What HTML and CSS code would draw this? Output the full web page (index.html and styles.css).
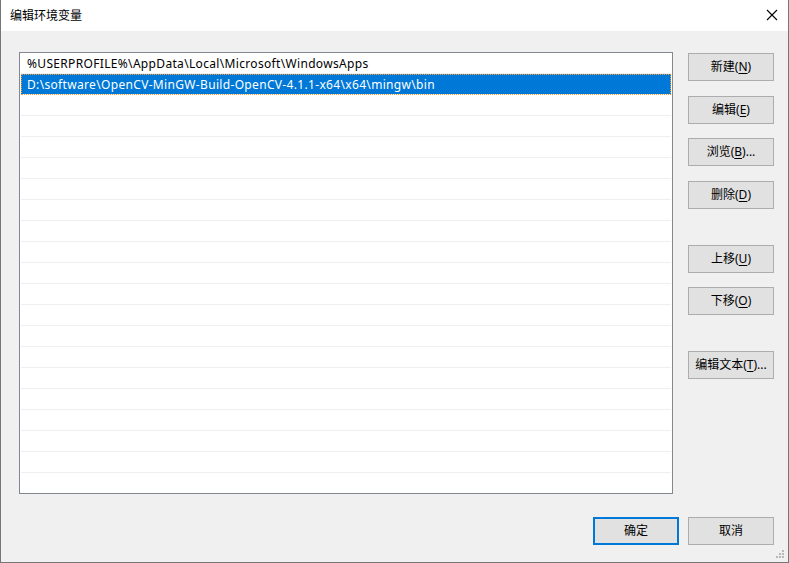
FILE: index.html
```html
<!DOCTYPE html>
<html lang="zh-CN">
<head>
<meta charset="utf-8">
<title>编辑环境变量</title>
<link rel="stylesheet" href="styles.css">
</head>
<body>
<div class="window">
  <div class="titlebar">
    <span class="title">编辑环境变量</span>
    <svg class="close" width="12" height="12" viewBox="0 0 12 12"><path d="M1 1 L11 11 M11 1 L1 11" stroke="#000" stroke-width="1.1" fill="none"/></svg>
  </div>
  <div class="content">
    <div class="main">
      <div class="list">
        <div class="row">%USERPROFILE%\AppData\Local\Microsoft\WindowsApps</div>
        <div class="row selected"><span>D:\software\OpenCV-MinGW-Build-OpenCV-4.1.1-x64\x64\mingw\bin</span></div>
        <div class="row"></div><div class="row"></div><div class="row"></div><div class="row"></div>
        <div class="row"></div><div class="row"></div><div class="row"></div><div class="row"></div>
        <div class="row"></div><div class="row"></div><div class="row"></div><div class="row"></div>
        <div class="row"></div><div class="row"></div><div class="row"></div><div class="row"></div>
        <div class="row"></div><div class="row"></div>
      </div>
      <div class="side">
        <button class="btn first">新建(<u>N</u>)</button>
        <button class="btn gap-15">编辑(<u>E</u>)</button>
        <button class="btn gap-14">浏览(<u>B</u>)...</button>
        <button class="btn gap-15">删除(<u>D</u>)</button>
        <button class="btn gap-36">上移(<u>U</u>)</button>
        <button class="btn gap-14">下移(<u>O</u>)</button>
        <button class="btn gap-36">编辑文本(<u>T</u>)...</button>
      </div>
    </div>
    <div class="footer">
      <button class="btn default">确定</button>
      <button class="btn">取消</button>
    </div>
  </div>
  <svg class="grip" width="9" height="9" viewBox="0 0 9 9">
    <rect x="6" y="0" width="2" height="2" fill="#b8b8b8"/>
    <rect x="3" y="3" width="2" height="2" fill="#b8b8b8"/>
    <rect x="6" y="3" width="2" height="2" fill="#b8b8b8"/>
    <rect x="0" y="6" width="2" height="2" fill="#b8b8b8"/>
    <rect x="3" y="6" width="2" height="2" fill="#b8b8b8"/>
    <rect x="6" y="6" width="2" height="2" fill="#b8b8b8"/>
  </svg>
</div>
</body>
</html>
```
FILE: styles.css
```css
* { box-sizing: border-box; }
html, body { margin: 0; padding: 0; background: #f0f0f0; }
body {
  font-family: "Noto Sans", "Noto Sans CJK SC", sans-serif;
  font-size: 12px;
  color: #000;
}
.window {
  position: relative;
  width: 789px;
  height: 563px;
  border-left: 1px solid #767676;
  border-right: 1px solid #767676;
  border-bottom: 1px solid #767676;
  background: #f0f0f0;
  display: flex;
  flex-direction: column;
}
.titlebar {
  height: 31px;
  background: #fff;
  display: flex;
  align-items: center;
  justify-content: space-between;
  padding: 0 10px 0 9px;
}
.title {
  font-family: "Noto Sans CJK SC", sans-serif;
  font-size: 12px;
  line-height: 16px;
  margin-top: -1px;
}
.close { display: block; margin-top: -1px; }
.content {
  flex: 1;
  padding: 21px 14px 0 18px;
  display: flex;
  flex-direction: column;
}
.main {
  display: flex;
  gap: 15px;
}
.list {
  width: 654px;
  height: 442px;
  border: 1px solid #828790;
  background: #fff;
  padding: 0 1px;
  overflow: hidden;
}
.row {
  height: 21px;
  border-bottom: 1px solid #efefef;
  line-height: 18px;
  padding: 2px 0 0 6px;
  white-space: nowrap;
  font-size: 12px;
  letter-spacing: 0.33px;
}
.row.selected {
  background: #0078d7;
  color: #fff;
  outline: 1px dotted #f29b3a;
  outline-offset: -1px;
  border-bottom-color: #fff;
}
.side {
  display: flex;
  flex-direction: column;
}
.btn {
  width: 86px;
  height: 28px;
  border: 1px solid #adadad;
  background: #e1e1e1;
  font-family: "Noto Sans", "Noto Sans CJK SC", sans-serif;
  font-size: 12px;
  color: #000;
  padding: 0;
  line-height: 26px;
}
.btn u { text-underline-offset: 2px; }
.btn.first { margin-top: 1px; }
.btn.gap-14 { margin-top: 14px; }
.btn.gap-15 { margin-top: 15px; }
.btn.gap-36 { margin-top: 36px; }
.footer {
  margin-top: 23px;
  display: flex;
  justify-content: flex-end;
  gap: 9px;
}
.btn.default {
  border: 2px solid #0078d7;
  line-height: 24px;
}
.grip {
  position: absolute;
  right: 3px;
  bottom: 3px;
}
```
